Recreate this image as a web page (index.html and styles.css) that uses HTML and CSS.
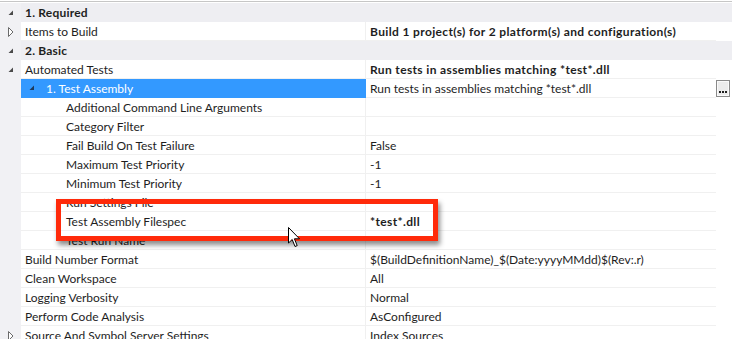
FILE: index.html
```html
<!DOCTYPE html>
<html>
<head>
<meta charset="utf-8">
<link rel="stylesheet" href="styles.css">
</head>
<body>
<div class="page">
  <div class="grid">
    <div class="row cat">
      <span class="gut"><svg class="tri" width="6" height="6" viewBox="0 0 6 6"><polygon points="5,0.5 5,5 0.5,5"/></svg></span>
      <span class="name bold">1. Required</span><span class="val"></span><span class="tail"></span>
    </div>
    <div class="row">
      <span class="gut"><svg class="tri-c" width="6" height="10" viewBox="0 0 6 10"><polygon points="0.5,0.5 5,5 0.5,9.5"/></svg></span>
      <span class="name">Items to Build</span><span class="val bold">Build 1 project(s) for 2 platform(s) and configuration(s)</span><span class="tail"></span>
    </div>
    <div class="row cat">
      <span class="gut"><svg class="tri" width="6" height="6" viewBox="0 0 6 6"><polygon points="5,0.5 5,5 0.5,5"/></svg></span>
      <span class="name bold">2. Basic</span><span class="val"></span><span class="tail"></span>
    </div>
    <div class="row">
      <span class="gut"><svg class="tri" width="6" height="6" viewBox="0 0 6 6"><polygon points="5,0.5 5,5 0.5,5"/></svg></span>
      <span class="name">Automated Tests</span><span class="val bold">Run tests in assemblies matching *test*.dll</span><span class="tail"></span>
    </div>
    <div class="row">
      <span class="gut"></span>
      <span class="name sel lvl1"><svg class="tri sel-tri" width="6" height="6" viewBox="0 0 6 6"><polygon points="5,0.5 5,5 0.5,5"/></svg>1. Test Assembly</span><span class="val">Run tests in assemblies matching *test*.dll</span><span class="tail"><span class="btn"><i></i><i></i><i></i></span></span>
    </div>
    <div class="row"><span class="gut"></span><span class="name lvl2">Additional Command Line Arguments</span><span class="val"></span><span class="tail"></span></div>
    <div class="row"><span class="gut"></span><span class="name lvl2">Category Filter</span><span class="val"></span><span class="tail"></span></div>
    <div class="row"><span class="gut"></span><span class="name lvl2">Fail Build On Test Failure</span><span class="val">False</span><span class="tail"></span></div>
    <div class="row"><span class="gut"></span><span class="name lvl2">Maximum Test Priority</span><span class="val">-1</span><span class="tail"></span></div>
    <div class="row"><span class="gut"></span><span class="name lvl2">Minimum Test Priority</span><span class="val">-1</span><span class="tail"></span></div>
    <div class="row"><span class="gut"></span><span class="name lvl2">Run Settings File</span><span class="val"></span><span class="tail"></span></div>
    <div class="row"><span class="gut"></span><span class="name lvl2">Test Assembly Filespec</span><span class="val bold">*test*.dll</span><span class="tail"></span></div>
    <div class="row"><span class="gut"></span><span class="name lvl2">Test Run Name</span><span class="val"></span><span class="tail"></span></div>
    <div class="row"><span class="gut"></span><span class="name">Build Number Format</span><span class="val">$(BuildDefinitionName)_$(Date:yyyyMMdd)$(Rev:.r)</span><span class="tail"></span></div>
    <div class="row"><span class="gut"></span><span class="name">Clean Workspace</span><span class="val">All</span><span class="tail"></span></div>
    <div class="row"><span class="gut"></span><span class="name">Logging Verbosity</span><span class="val">Normal</span><span class="tail"></span></div>
    <div class="row"><span class="gut"></span><span class="name">Perform Code Analysis</span><span class="val">AsConfigured</span><span class="tail"></span></div>
    <div class="row">
      <span class="gut"><svg class="tri-c" width="6" height="10" viewBox="0 0 6 10"><polygon points="0.5,0.5 5,5 0.5,9.5"/></svg></span>
      <span class="name">Source And Symbol Server Settings</span><span class="val">Index Sources</span><span class="tail"></span>
    </div>
  </div>
  <div class="callout"></div>
  <svg class="cursor" width="13" height="21" viewBox="0 0 13 21"><path d="M0.5,0.5 L0.5,16 L4.2,12.5 L7,19.5 L9.2,18.6 L6.4,11.8 L11.5,11.8 Z"/></svg>
</div>
</body>
</html>
```

FILE: styles.css
```css
html, body {
  margin: 0;
  padding: 0;
  background: #ffffff;
}
.page {
  position: relative;
  width: 732px;
  height: 339px;
  overflow: hidden;
  font-family: Lato, "Open Sans", sans-serif;
  font-size: 12px;
  color: #1e1e1e;
}
.grid {
  margin-top: 1px;
  border-top: 1px solid #c6c6c6;
  padding-top: 1px;
  display: flex;
  flex-direction: column;
}
.row {
  display: flex;
  height: 19px;
  flex: none;
}
.gut {
  width: 21px;
  flex: none;
  background: #f1f1f4;
  display: flex;
  align-items: center;
  padding-left: 8px;
  box-sizing: border-box;
}
.name {
  width: 345px;
  flex: none;
  box-sizing: border-box;
  padding-left: 4px;
  border-right: 1px solid #f0f0f0;
  border-bottom: 1px solid #f0f0f0;
  display: flex;
  align-items: center;
  white-space: nowrap;
}
.val {
  flex: 1;
  box-sizing: border-box;
  padding-left: 4px;
  border-bottom: 1px solid #f0f0f0;
  display: flex;
  align-items: center;
  white-space: nowrap;
}
.tail {
  width: 16px;
  flex: none;
  display: flex;
  align-items: center;
}
.bold {
  font-weight: 700;
  letter-spacing: 0.36px;
}
.cat, .cat .name, .cat .val, .cat .tail { background: #eeeef2; }
.cat .name, .cat .val { border-color: #eeeef2; }
.cat .name.bold { letter-spacing: 0.2px; }
.lvl1 { padding-left: 8px; }
.lvl1 .tri { margin-right: 11px; }
.lvl2 { padding-left: 45px; }
.sel {
  background: #3399ff;
  color: #ffffff;
  border-color: #3399ff;
}
.tri polygon { fill: #4a4a4a; }
.sel-tri polygon { fill: #1e3a5c; }
.tri-c polygon { fill: #ffffff; stroke: #6a6a6a; stroke-width: 1; }
.btn {
  width: 14px;
  height: 17px;
  box-sizing: border-box;
  border: 1px solid #8a8a8a;
  background: #ececec;
  box-shadow: inset 0 0 0 1px #fafafa;
  display: flex;
  align-items: flex-end;
  justify-content: center;
  gap: 1px;
  padding-bottom: 3px;
}
.btn i {
  display: block;
  width: 2px;
  height: 2px;
  background: #1e1e1e;
}
.callout {
  position: absolute;
  left: 56px;
  top: 199px;
  width: 382px;
  height: 42px;
  box-sizing: border-box;
  border: 5px solid #ff2a0a;
  box-shadow: 2px 4px 5px rgba(0, 0, 0, 0.45);
}
.cursor {
  position: absolute;
  left: 288px;
  top: 227px;
}
.cursor path {
  fill: #ffffff;
  stroke: #000000;
  stroke-width: 1;
}
```
